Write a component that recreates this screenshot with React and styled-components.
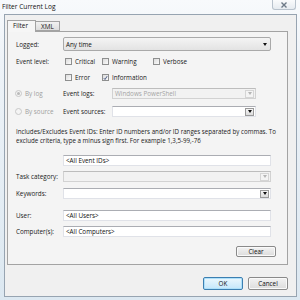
import React from 'react';
import styled, { createGlobalStyle } from 'styled-components';

const Global = createGlobalStyle`
  html, body { margin: 0; padding: 0; }
  body {
    width: 300px;
    height: 300px;
    overflow: hidden;
    background: #dfeaf3;
    font-family: "Open Sans", "Liberation Sans", sans-serif;
  }
`;

const Frame = styled.div`
  width: 300px;
  height: 300px;
  box-sizing: border-box;
  display: flex;
  flex-direction: column;
  padding: 0 3px 3px 4px;
  background: linear-gradient(to bottom, #f8fafc 0px, #eef3f8 60px, #dce8f1 100%);
`;

const TitleBar = styled.div`
  height: 14px;
  display: flex;
  align-items: flex-start;
  justify-content: space-between;
  margin-left: -2px;
`;

const Title = styled.span`
  font-size: 6.6px;
  line-height: 14px;
  color: #111;
`;

const CloseBtn = styled.div`
  width: 24px;
  height: 10px;
  box-sizing: border-box;
  border: 1px solid #b8c2cc;
  border-top: none;
  border-radius: 0 0 3px 3px;
  background: linear-gradient(#fafbfc, #e6ebf0);
  display: flex;
  align-items: center;
  justify-content: center;
  margin-right: 1px;
`;

const Client = styled.div`
  flex: 1;
  border: 1px solid #97a4b1;
  background: #f0f0f0;
  padding: 5px 8px 0 2px;
  display: flex;
  flex-direction: column;
`;

const TabBar = styled.div`
  display: flex;
  align-items: flex-end;
  height: 11px;
`;

const Tab = styled.div`
  box-sizing: border-box;
  width: ${p => p.$w}px;
  height: ${p => (p.$active ? 12 : 10)}px;
  margin-left: ${p => (p.$active ? 0 : -1)}px;
  margin-bottom: ${p => (p.$active ? -1 : 0)}px;
  border: 1px solid #a3a3a3;
  border-bottom: ${p => (p.$active ? 'none' : '1px solid #a3a3a3')};
  background: ${p => (p.$active ? '#f6f6f6' : 'linear-gradient(#f2f2f2, #dedede)')};
  font-size: 6.4px;
  color: #111;
  padding-left: 5px;
  line-height: 9px;
  position: relative;
  z-index: ${p => (p.$active ? 2 : 1)};
`;

const Panel = styled.div`
  height: 234px;
  box-sizing: border-box;
  border: 1px solid #a3a3a3;
  background: #f4f4f4;
  padding: 0 16px 0 8px;
  display: flex;
  flex-direction: column;
  width: 281px;
`;

const Row = styled.div`
  display: grid;
  grid-template-columns: ${p => p.$cols || '47px 1fr'};
  align-items: center;
  height: ${p => p.$h || 11}px;
  margin-top: ${p => p.$top}px;
`;

const Label = styled.span`
  font-size: 6.3px;
  color: ${p => (p.$muted ? '#a0a0a0' : '#1a1a1a')};
  white-space: nowrap;
`;

const Combo = styled.div`
  height: 14px;
  box-sizing: border-box;
  border: 1px solid #a9a9a9;
  border-radius: 2px;
  background: linear-gradient(#f4f4f4, #e3e3e3);
  display: flex;
  align-items: center;
  justify-content: space-between;
  padding: 0 3px 0 2px;
  font-size: 6.3px;
  color: #111;
`;

const Field = styled.div`
  height: 11px;
  box-sizing: border-box;
  border: 1px solid ${p => (p.$disabled ? '#d2d2d2' : '#e0e2e8')};
  border-top-color: ${p => (p.$disabled ? '#bdbdbd' : '#abadb3')};
  background: ${p => (p.$disabled ? '#f2f2f2' : '#fff')};
  display: flex;
  align-items: center;
  justify-content: space-between;
  padding: 0 1px 0 2px;
  font-size: 6.3px;
  color: ${p => (p.$disabled ? '#a5a5a5' : '#111')};
`;

const DropBtn = styled.div`
  width: 9px;
  height: 8px;
  box-sizing: border-box;
  border: 1px solid ${p => (p.$disabled ? '#d5d5d5' : '#9a9a9a')};
  background: ${p => (p.$disabled ? '#f4f4f4' : 'linear-gradient(#f5f5f5, #dcdcdc)')};
  display: flex;
  align-items: center;
  justify-content: center;
`;

const Arrow = styled.span`
  width: 0;
  height: 0;
  border-left: 2.5px solid transparent;
  border-right: 2.5px solid transparent;
  border-top: 3px solid ${p => (p.$disabled ? '#b5b5b5' : '#111')};
`;

const Checks = styled.div`
  display: grid;
  grid-template-columns: 37px 51px 1fr;
  padding-left: 2px;
`;

const CheckItem = styled.div`
  display: flex;
  align-items: center;
  gap: 3px;
`;

const Box = styled.span`
  width: 7px;
  height: 7px;
  box-sizing: border-box;
  border: 1px solid #8e8f8f;
  background: linear-gradient(135deg, #dcdcdc, #fbfbfb);
  display: flex;
  align-items: center;
  justify-content: center;
`;

const Radio = styled.span`
  width: 7px;
  height: 7px;
  box-sizing: border-box;
  border-radius: 50%;
  border: 1px solid #c8c8c8;
  background: #f4f4f4;
  display: inline-flex;
  align-items: center;
  justify-content: center;
  &::after {
    content: '';
    width: 3px;
    height: 3px;
    border-radius: 50%;
    background: ${p => (p.$on ? '#b9b9b9' : 'transparent')};
  }
`;

const RadioItem = styled.div`
  display: flex;
  align-items: center;
  gap: 3px;
  margin-left: -1px;
`;

const Para = styled.p`
  margin: 10px 0 0 0;
  font-size: 6.2px;
  line-height: 9px;
  color: #1a1a1a;
  white-space: nowrap;
`;

const BtnRow = styled.div`
  display: flex;
  justify-content: flex-end;
  gap: 5px;
  margin-top: ${p => p.$top}px;
  margin-right: ${p => p.$right || 0}px;
`;

const Button = styled.div`
  width: ${p => p.$w || 40}px;
  height: ${p => p.$h || 13}px;
  box-sizing: border-box;
  border: 1px solid ${p => (p.$primary ? '#3c7fb1' : '#8a8a8a')};
  border-radius: 2px;
  background: ${p => (p.$primary ? 'linear-gradient(#ecf7fd, #c4e7fb)' : 'linear-gradient(#f3f3f3, #dcdcdc)')};
  box-shadow: inset 0 0 0 1px ${p => (p.$primary ? '#aee0fa' : '#fafafa')};
  font-size: 6.3px;
  color: #111;
  display: flex;
  align-items: center;
  justify-content: center;
`;

const Check = ({ label, on }) => (
  <CheckItem>
    <Box>
      {on && (
        <svg width="6" height="6" viewBox="0 0 6 6">
          <path d="M1 3.2 L2.4 4.8 L5 0.8" fill="none" stroke="#2d3f6e" strokeWidth="1" />
        </svg>
      )}
    </Box>
    <Label>{label}</Label>
  </CheckItem>
);

const DropField = ({ children, disabled }) => (
  <Field $disabled={disabled}>
    <span>{children}</span>
    <DropBtn $disabled={disabled}>
      <Arrow $disabled={disabled} />
    </DropBtn>
  </Field>
);

export default function App() {
  return (
    <>
      <Global />
      <Frame>
        <TitleBar>
          <Title>Filter Current Log</Title>
          <CloseBtn>
            <svg width="8" height="6" viewBox="0 0 8 6">
              <path d="M1.5 0.5 L6.5 5.5 M6.5 0.5 L1.5 5.5" stroke="#6d7987" strokeWidth="1.4" />
            </svg>
          </CloseBtn>
        </TitleBar>
        <Client>
          <TabBar>
            <Tab $active $w={29}>Filter</Tab>
            <Tab $w={25}>XML</Tab>
          </TabBar>
          <Panel>
            <Row $top={5} $h={14}>
              <Label>Logged:</Label>
              <Combo>
                <span>Any time</span>
                <Arrow />
              </Combo>
            </Row>
            <Row $top={5}>
              <Label>Event level:</Label>
              <Checks>
                <Check label="Critical" />
                <Check label="Warning" />
                <Check label="Verbose" />
              </Checks>
            </Row>
            <Row $top={5}>
              <span />
              <Checks>
                <Check label="Error" />
                <Check label="Information" on />
              </Checks>
            </Row>
            <Row $top={5} $cols="47px 49px 144px">
              <RadioItem>
                <Radio $on />
                <Label $muted>By log</Label>
              </RadioItem>
              <Label>Event logs:</Label>
              <DropField disabled>Windows PowerShell</DropField>
            </Row>
            <Row $top={7} $cols="47px 49px 144px">
              <RadioItem>
                <Radio />
                <Label $muted>By source</Label>
              </RadioItem>
              <Label>Event sources:</Label>
              <DropField />
            </Row>
            <Para>
              Includes/Excludes Event IDs: Enter ID numbers and/or ID ranges separated by commas. To
              <br />
              exclude criteria, type a minus sign first. For example 1,3,5-99,-76
            </Para>
            <Row $top={10}>
              <span />
              <Field>&lt;All Event IDs&gt;</Field>
            </Row>
            <Row $top={5}>
              <Label>Task category:</Label>
              <DropField disabled />
            </Row>
            <Row $top={6}>
              <Label>Keywords:</Label>
              <DropField />
            </Row>
            <Row $top={11}>
              <Label>User:</Label>
              <Field>&lt;All Users&gt;</Field>
            </Row>
            <Row $top={5}>
              <Label>Computer(s):</Label>
              <Field>&lt;All Computers&gt;</Field>
            </Row>
            <BtnRow $top={9} $right={-5}>
              <Button $h={11}>Clear</Button>
            </BtnRow>
          </Panel>
          <BtnRow $top={12}>
            <Button $primary>OK</Button>
            <Button>Cancel</Button>
          </BtnRow>
        </Client>
      </Frame>
    </>
  );
}
